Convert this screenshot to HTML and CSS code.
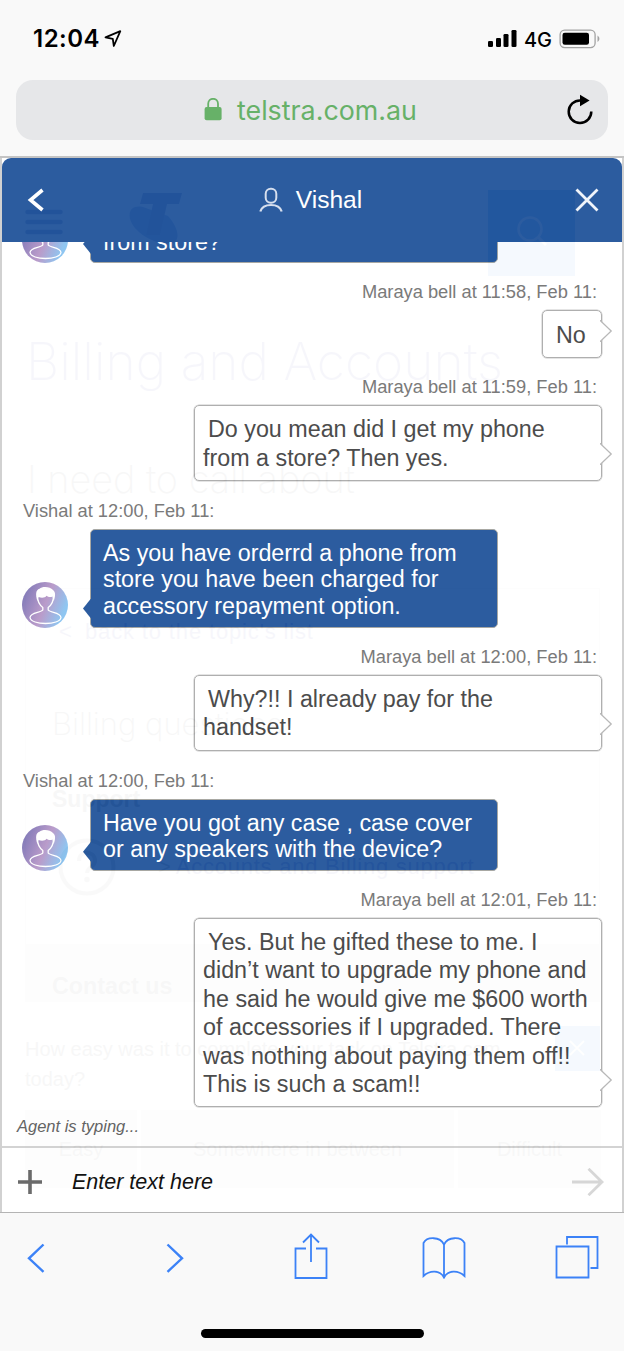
FILE: index.html
```html
<!DOCTYPE html>
<html lang="en">
<head>
<meta charset="utf-8">
<meta name="viewport" content="width=device-width">
<title>telstra.com.au</title>
<link rel="stylesheet" href="styles.css">
</head>
<body>
<svg width="0" height="0" class="defs">
  <defs>
    <linearGradient id="av" x1="0" y1="0.3" x2="1" y2="0.7">
      <stop offset="0.05" stop-color="#8379b8"/><stop offset="0.5" stop-color="#b898c8"/><stop offset="0.9" stop-color="#8bc4f1"/>
    </linearGradient>
    <symbol id="avatar" viewBox="0 0 46 46">
      <circle cx="23" cy="23" r="23" fill="url(#av)"/>
      <path d="M15.500 14c0 5 2 9 5.300 11.500v2.500c-2 3-12.300 2-12.800 7.500 1 8 30 8 31 0-.5-5.500-10.800-4.500-12.800-7.500v-2.500c3.300-2.500 5.300-6.500 5.300-11.500" fill="none" stroke="#fff" stroke-width="1.300" stroke-linejoin="round"/>
      <path d="M15.300 19c-2-7-1.500-11 2.200-12.200C20 4.300 28 4.300 31 8c3 2 2.300 7 .7 11l-1.200-4.500c-2 1-4.500.5-6-.8-1.500 2.300-5 2.300-8 1.300z" fill="#fff"/>
    </symbol>
  </defs>
</svg>

<header class="statusbar">
  <span class="clock">12:04</span>
  <svg class="loc" width="18" height="18" viewBox="0 0 18 18"><path d="M16.300 1.200L1.500 7.400l7.300 1.400 1 7.200z" fill="none" stroke="#000" stroke-width="1.800" stroke-linejoin="round"/></svg>
  <svg class="signal" width="30" height="20" viewBox="0 0 30 20"><rect x="1" y="12" width="5" height="6" rx="1.300"/><rect x="9" y="9" width="5" height="9" rx="1.300"/><rect x="16.500" y="5" width="5" height="13" rx="1.300"/><rect x="24.500" y="1" width="5" height="17" rx="1.300"/></svg>
  <span class="net">4G</span>
  <svg class="battery" width="42" height="20" viewBox="0 0 42 20"><rect x="1.100" y="1.100" width="35" height="17.500" rx="4.500" fill="none" stroke="#a3a3a3" stroke-width="1.300"/><rect x="3.500" y="3.800" width="26.500" height="12" rx="2.300"/><path d="M38.500 6.500c2.500 1.500 2.500 5 0 6.500z" fill="#a3a3a3"/></svg>
</header>

<div class="urlbar">
  <svg class="lock" width="18" height="24" viewBox="0 0 18 24"><path d="M4.200 10V5.700a4.900 4.900 0 0 1 9.800 0V10" fill="none" stroke="#67b168" stroke-width="1.800"/><rect x=".6" y="9" width="17" height="13.300" rx="2" fill="#67b168"/></svg>
  <span class="domain">telstra.com.au</span>
  <svg class="reload" width="28" height="32" viewBox="0 0 28 32"><path d="M14.500 6.400A11.300 11.300 0 1 0 25.300 17.500" fill="none" stroke="#000" stroke-width="2.500"/><path d="M14 .8v11.500l9.600-5.800z"/></svg>
</div>

<main class="stage">
  <section class="site" aria-hidden="true">
    <div class="site-head">
      <svg class="burger" width="38" height="27" viewBox="0 0 38 27"><path d="M2.500 3h33M2.500 13h33M2.500 23h33" stroke="#001e82" stroke-width="4.500" stroke-linecap="round"/></svg>
      <svg class="tlogo" width="54" height="54" viewBox="0 0 54 54"><path d="M14 15C4 13-1 18 1 27c4 14 26 27 42 24 10-3 5-17-4-27z" fill="#1450b4"/><path d="M14 1h39l-3 11H38l-7 31H17l7-31H11z" fill="#001e82"/></svg>
      <div class="site-search"><svg width="32" height="32" viewBox="0 0 32 32"><circle cx="14" cy="13" r="11.500" fill="none" stroke="#fff" stroke-width="2.500"/><path d="M22 21l8 8" stroke="#fff" stroke-width="3"/></svg></div>
    </div>
    <div class="site-title">Billing and Accounts</div>
    <div class="site-sub">I need to call about</div>
    <div class="site-card">
      <div class="site-back"><span class="lt">&lt;</span>back to the topic's list</div>
      <div class="site-q">Billing questions</div>
      <div class="site-support">Support</div>
      <div class="site-help">
        <svg width="58" height="58" viewBox="0 0 58 58"><circle cx="29" cy="29" r="26.500" fill="none" stroke="#777" stroke-width="4"/><path d="M21 23c0-11 16-11 16 0 0 6-8 6-8 12" fill="none" stroke="#777" stroke-width="4"/><circle cx="29" cy="41.500" r="2.700" fill="#777"/></svg>
        <span class="gt">&gt;</span><span class="site-link">Accounts and Billing support</span>
      </div>
      <div class="site-contact">Contact us</div>
    </div>
    <div class="site-survey">
      <p>How easy was it to complete your task on Telstra.com<br>today?</p>
      <div class="site-x"><svg width="16" height="16" viewBox="0 0 16 16"><path d="M1 1l14 14M15 1L1 15" stroke="#fff" stroke-width="2"/></svg></div>
    </div>
    <div class="site-opts"><span>Easy</span><span>Somewhere in between</span><span>Difficult</span></div>
  </section>

  <section class="chat">
    <div class="chat-head">
      <svg class="back" width="18" height="24" viewBox="0 0 18 24"><path d="M15.500 2L3.500 12l12 10" fill="none" stroke="#fff" stroke-width="3.600"/></svg>
      <div class="who">
        <svg width="24" height="26" viewBox="0 0 24 26"><rect x="6.700" y="1.700" width="10.600" height="14" rx="5" fill="none" stroke="#d5deee" stroke-width="2"/><path d="M1.300 24.500C3 19 7 18 12 18s9 1 10.700 6.500" fill="none" stroke="#d5deee" stroke-width="2.200"/></svg>
        <span>Vishal</span>
      </div>
      <svg class="close" width="24" height="24" viewBox="0 0 24 24"><path d="M1.500 1.500l21 21M22.500 1.500l-21 21" stroke="#f0f4fa" stroke-width="2.800"/></svg>
    </div>

    <div class="log">
      <div class="row"><svg class="avatar"><use href="#avatar"/></svg><div class="bubble agent"><i class="tail"></i>from store?</div></div>
      <div class="meta">Maraya bell at 11:58, Feb 11:</div>
      <div class="bubble user short">No<svg class="arrow" width="13" height="22" viewBox="0 0 13 22"><path d="M.7 0v1l10.500 10L.7 21v1" /></svg></div>
      <div class="meta">Maraya bell at 11:59, Feb 11:</div>
      <div class="bubble user">Do you mean did I get my phone<br>from a store? Then yes.<svg class="arrow" width="13" height="22" viewBox="0 0 13 22"><path d="M.7 0v1l10.500 10L.7 21v1" /></svg></div>
      <div class="meta left">Vishal at 12:00, Feb 11:</div>
      <div class="row"><svg class="avatar"><use href="#avatar"/></svg><div class="bubble agent"><i class="tail"></i>As you have orderrd a phone from<br>store you have been charged for<br>accessory repayment option.</div></div>
      <div class="meta">Maraya bell at 12:00, Feb 11:</div>
      <div class="bubble user">Why?!! I already pay for the<br>handset!<svg class="arrow" width="13" height="22" viewBox="0 0 13 22"><path d="M.7 0v1l10.500 10L.7 21v1" /></svg></div>
      <div class="meta left">Vishal at 12:00, Feb 11:</div>
      <div class="row"><svg class="avatar"><use href="#avatar"/></svg><div class="bubble agent"><i class="tail"></i>Have you got any case , case cover<br>or any speakers with the device?</div></div>
      <div class="meta">Maraya bell at 12:01, Feb 11:</div>
      <div class="bubble user">Yes. But he gifted these to me. I<br>didn’t want to upgrade my phone and<br>he said he would give me $600 worth<br>of accessories if I upgraded. There<br>was nothing about paying them off!!<br>This is such a scam!!<svg class="arrow" width="13" height="22" viewBox="0 0 13 22"><path d="M.7 0v1l10.500 10L.7 21v1" /></svg></div>
      <div class="typing">Agent is typing...</div>
    </div>

    <div class="composer">
      <svg width="24" height="24" viewBox="0 0 24 24"><path d="M12 0v24M0 12h24" stroke="#666" stroke-width="3.600"/></svg>
      <span>Enter text here</span>
      <svg class="send" width="32" height="28" viewBox="0 0 32 28"><path d="M0 14h30M16.500 .8L30 14 16.500 27.200" fill="none" stroke="#d6d6d6" stroke-width="2.800"/></svg>
    </div>
  </section>
</main>

<footer class="toolbar">
  <nav class="tools">
    <svg width="18" height="32" viewBox="0 0 18 32"><path d="M16.500 2.500L2 16.300l14.500 13.500"/></svg>
    <svg width="18" height="32" viewBox="0 0 18 32"><path d="M1.500 2.500L16 16.300 1.500 29.800"/></svg>
    <svg class="thin share" width="34" height="46" viewBox="0 0 34 46"><path d="M12 15.500H1.500V45h31V15.500H22M17 29V2M9 9.500L17 1.500l8 8"/></svg>
    <svg class="thin" width="44" height="42" viewBox="0 0 44 42"><path d="M22 7.500V41M22 7.500C18-.6 5-.6 1.500 6v33C8 33 18 33 22 40.500 26 33 36 33 42.500 39V6C39-.6 26-.6 22 7.500z"/></svg>
    <svg class="thin tabs" width="44" height="44" viewBox="0 0 44 44"><path d="M1.500 11.500h32V42.500h-32zM12 9.500V2h30.500v31H35.500"/></svg>
  </nav>
  <div class="home"></div>
</footer>
</body>
</html>
```
FILE: styles.css
```css
* { box-sizing: border-box; }
body { margin: 0; width: 624px; height: 1351px; display: flex; flex-direction: column; overflow: hidden; background: #f9f9f9; font-family: "Liberation Sans", Arial, sans-serif; }
svg { display: block; flex: none; }
.defs { position: absolute; }

.statusbar { height: 80px; padding: 0 23px 3px 33px; display: flex; align-items: center; font-family: Inter, sans-serif; color: #000; }
.clock { font-size: 24px; font-weight: 600; letter-spacing: 0.5px; }
.loc { margin-left: 4px; }
.signal { margin-left: auto; }
.net { margin: 2px 7px 0 7px; font-size: 20px; font-weight: 450; }

.urlbar { height: 60px; margin: 0 16px; padding: 0 14px 0 188px; display: flex; align-items: center; border-radius: 17px; background: #e6e7e9; }
.domain { margin-left: 15px; font: 400 26.8px Inter, sans-serif; color: #67b168; white-space: nowrap; }
.reload { margin-left: auto; }

.stage { flex: none; height: 1057px; margin-top: 16px; display: grid; grid-template: 100% / 100%; border-top: 2px solid #c4c4c4; border-bottom: 1px solid #b4b4b4; background: #fff; overflow: hidden; }
.site, .chat { grid-area: 1 / 1; min-width: 0; min-height: 0; }

.site { padding: 0 24px 0 25px; color: #333; overflow: hidden; white-space: nowrap; font-family: Inter, sans-serif; }
.site-head { display: flex; height: 150px; padding-top: 32px; }
.burger { margin-top: 19px; }
.tlogo { margin: 2px 0 0 66px; }
.site-search { width: 87px; height: 86px; margin-left: auto; margin-right: 25px; padding: 26px 0 0 28px; background: #0078e6; }
.site-title { height: 108px; padding-left: 1px; font: 200 51.5px/106px Inter, sans-serif; color: #2828a0; }
.site-sub { height: 172px; padding: 35px 0 0 2px; font: 200 37.8px/56px Inter, sans-serif; }
.site-card { height: 414px; border: 1px solid #ddd; border-bottom: 0; }
.site-back { height: 89px; padding: 30px 0 0 33px; font: 22px/26px "Liberation Sans", sans-serif; letter-spacing: 0.85px; color: #2828a0; }
.lt { display: inline-block; width: 26px; }
.site-q { height: 108px; padding-left: 26px; font: 200 31px/92px Inter, sans-serif; }
.site-support { height: 40px; padding-left: 26px; font: 700 23px/26px "Liberation Sans", sans-serif; }
.site-help { display: flex; align-items: center; height: 81px; padding-left: 32px; font: 22px "Liberation Sans", sans-serif; }
.gt { margin-left: 42px; }
.site-link { margin-left: 5px; letter-spacing: 0.75px; color: #2828a0; }
.site-contact { height: 58px; margin-top: 37px; padding: 15px 0 0 26px; background: #d8d8d8; font: 700 23.3px/54px "Liberation Sans", sans-serif; }
.site-survey { display: flex; height: 108px; padding-top: 24px; font: 20px/30px "Liberation Sans", sans-serif; }
.site-survey p { margin: 8px 0 0; width: 530px; }
.site-x { width: 45px; height: 45px; padding: 14px; background: #0078e6; }
.site-opts { display: grid; grid-template-columns: 112px 313px 143px; gap: 4px; font: 20px/78px "Liberation Sans", sans-serif; text-align: center; }
.site-opts span { background: #d8d8d8; }

.chat { display: flex; flex-direction: column; border: solid #d0d0d0; border-width: 0 2px; background: #fff; opacity: 0.96; }
.chat-head { flex: none; height: 84px; padding: 0 23px 0 25px; display: flex; align-items: center; justify-content: space-between; border-radius: 9px 9px 0 0; background: #24569c; color: #fff; }
.who { display: flex; align-items: center; gap: 13px; font-size: 24.6px; margin-left: 1px; }

.log { flex: none; height: 904px; padding: 0 20px; display: flex; flex-direction: column; justify-content: flex-end; overflow: hidden; white-space: nowrap; }
.log > * { flex: none; }
.meta { height: 47px; padding: 18px 5px 0 0; text-align: right; font-size: 18.3px; line-height: 22px; color: #757575; }
.meta.left { height: 48px; padding: 19.5px 0 0 1px; text-align: left; }
.row { display: flex; align-items: flex-end; gap: 22px; }
.avatar { width: 46px; height: 46px; }
.bubble { position: relative; width: 408px; border-radius: 5px; font-size: 23.3px; }
.user { align-self: flex-end; padding: 9.5px 0 7.8px 8px; border: 1px solid #acacac; box-shadow: 0 0 0 0.5px #c8c8c8; line-height: 28.35px; text-indent: 5px; color: #454545; }
.short { width: 60px; }
.agent { padding: 10px 0 6.5px 12px; border: 1px solid #a5a5a0; line-height: 26.8px; background: #24569c; color: #fff; }
.arrow { position: absolute; right: -12px; bottom: 15px; fill: #fff; stroke: #b6b6b6; stroke-width: 1.3; }
.tail { position: absolute; left: -8px; bottom: 8px; width: 8px; height: 20px; background: #24569c; clip-path: polygon(0 50%, 100% 0, 100% 100%); }
.typing { height: 39px; padding-top: 8px; margin-left: -5px; font-size: 16.5px; line-height: 22px; font-style: italic; color: #606060; }

.composer { flex: 1; display: flex; align-items: center; padding: 3px 18px 0 16px; border-top: 2px solid #d2d2d2; }
.composer span { margin: 1px 0 0 30px; font-size: 21.5px; font-style: italic; color: #0a0a0a; }
.send { margin-left: auto; }

.toolbar { flex: 1; display: flex; flex-direction: column; align-items: center; }
.tools { width: 100%; height: 90px; padding: 0 26px 0 27px; display: grid; grid-template-columns: 139px 128px 128px 133px 44px; align-items: center; fill: none; stroke: #3c82f7; stroke-width: 2.4; }
.thin { stroke-width: 1.8; }
.share { margin-bottom: 4px; }
.tabs { margin-bottom: 2px; }
.home { width: 223px; height: 9px; margin-top: 26px; border-radius: 5px; background: #000; }
```
